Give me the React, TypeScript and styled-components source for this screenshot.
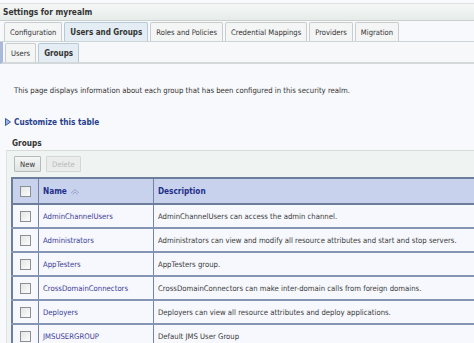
import React from "react";
import styled, { createGlobalStyle } from "styled-components";

const GlobalStyle = createGlobalStyle`
  body {
    margin: 0;
    background: #f8f9fc;
    font-family: "DejaVu Sans Condensed", "DejaVu Sans", "Liberation Sans", sans-serif;
    font-size: 7.7px;
    color: #333;
  }
`;

const Page = styled.div`
  width: 474px;
  height: 343px;
  overflow: hidden;
  padding-top: 3px;
  box-sizing: border-box;
`;

const TitleBar = styled.div`
  height: 16px;
  display: flex;
  align-items: center;
  padding-left: 3px;
  font-weight: bold;
  font-size: 8.3px;
  color: #333;
  background: linear-gradient(#f5f7f6, #e6ece9);
  border-top: 1px solid #dde2e0;
  border-bottom: 1px solid #c9d0cd;
`;

const TabRow = styled.div`
  display: flex;
  gap: 2px;
  padding: 1px 0 0 4px;
  border-bottom: 1px solid #cdd5d8;
`;

const Tab = styled.div<{ $active?: boolean }>`
  height: 18px;
  display: flex;
  align-items: center;
  padding: 0 5px;
  border: 1px solid ${(p) => (p.$active ? "#b7c9d6" : "#c9cecd")};
  border-bottom: none;
  border-radius: 2px 2px 0 0;
  background: ${(p) => (p.$active ? "#e4edf3" : "#f4f5f5")};
  font-weight: ${(p) => (p.$active ? "bold" : "normal")};
  font-size: ${(p) => (p.$active ? "8px" : "7.6px")};
  color: #333;
`;

const SubTabArea = styled.div`
  display: flex;
  gap: 2px;
  padding: 1px 0 0 2px;
  border-left: 3px solid #a8b9dc;
  border-bottom: 2px solid #d3d8da;
  background: #f7f8f9;
`;

const Intro = styled.p`
  margin: 22px 0 0 14px;
  line-height: 10px;
`;

const CustomizeLink = styled.div`
  margin: 21px 0 0 5px;
  display: flex;
  align-items: center;
  gap: 3px;
  font-weight: bold;
  font-size: 8.2px;
  color: #283f8c;
`;

const SectionHeading = styled.div`
  margin: 11px 0 0 12px;
  font-weight: bold;
  font-size: 8.2px;
  color: #333;
`;

const Panel = styled.div`
  margin: 2px 0 0 6px;
  padding: 5px 0 0 4px;
  background: #eff4f2;
  border-top: 1px solid #d6dcda;
  border-left: 1px solid #e0e5e3;
`;

const ButtonBar = styled.div`
  display: flex;
  gap: 5px;
  margin-left: 3px;
  margin-bottom: 5px;
`;

const Button = styled.button<{ $disabled?: boolean }>`
  height: 16px;
  padding: 0 5px;
  font: inherit;
  font-size: 7.7px;
  color: ${(p) => (p.$disabled ? "#b3b8b6" : "#333")};
  background: ${(p) => (p.$disabled ? "#e9eceb" : "linear-gradient(#f5f6f6, #dfe3e2)")};
  border: 1px solid ${(p) => (p.$disabled ? "#d3d8d6" : "#b5bbb9")};
  border-radius: 1px;
`;

const Table = styled.table`
  border-collapse: collapse;
  width: 490px;
  border: 2px solid #6d7e9c;
  border-right: none;
  table-layout: fixed;
`;

const HeadCell = styled.th<{ $w?: number }>`
  ${(p) => (p.$w ? `width: ${p.$w}px;` : "")}
  height: 24px;
  padding: 0 4px;
  text-align: left;
  font-size: 8.2px;
  color: #1f2f8a;
  background: #c9d2ec;
  border: 1px solid #7383a6;
  border-bottom: 2px solid #6d7e9c;
`;

const Cell = styled.td<{ $link?: boolean }>`
  height: 22px;
  padding: 0 4px;
  color: ${(p) => (p.$link ? "#3d3a98" : "#3a3a3a")};
  background: #f6f8fd;
  border: 1px solid #7383a6;
  border-top: 2px solid #8494b5;
  white-space: nowrap;
`;

const CheckCell = styled(Cell)`
  text-align: center;
  padding: 0;
`;

const Check = styled.span`
  display: inline-block;
  width: 9px;
  height: 9px;
  border: 1px solid #8a9090;
  background: linear-gradient(135deg, #e4e7e6, #fbfbfb);
  vertical-align: middle;
`;

const SortIcon = () => (
  <svg width="10" height="7" viewBox="0 0 10 7" style={{ marginLeft: 3, verticalAlign: "middle" }}>
    <path d="M1 5 L5 1.5 L9 5" fill="none" stroke="#9aa6c8" strokeWidth="1" />
    <path d="M2.5 6.3 L5 4 L7.5 6.3" fill="none" stroke="#9aa6c8" strokeWidth="1" />
  </svg>
);

const groups = [
  ["AdminChannelUsers", "AdminChannelUsers can access the admin channel."],
  ["Administrators", "Administrators can view and modify all resource attributes and start and stop servers."],
  ["AppTesters", "AppTesters group."],
  ["CrossDomainConnectors", "CrossDomainConnectors can make inter-domain calls from foreign domains."],
  ["Deployers", "Deployers can view all resource attributes and deploy applications."],
  ["JMSUSERGROUP", "Default JMS User Group"],
];

const tabs = ["Configuration", "Users and Groups", "Roles and Policies", "Credential Mappings", "Providers", "Migration"];

export default function App() {
  return (
    <Page>
      <GlobalStyle />
      <TitleBar>Settings for myrealm</TitleBar>
      <TabRow>
        {tabs.map((t) => (
          <Tab key={t} $active={t === "Users and Groups"}>
            {t}
          </Tab>
        ))}
      </TabRow>
      <SubTabArea>
        <Tab>Users</Tab>
        <Tab $active>Groups</Tab>
      </SubTabArea>
      <Intro>This page displays information about each group that has been configured in this security realm.</Intro>
      <CustomizeLink>
        <svg width="6" height="8" viewBox="0 0 6 8">
          <path d="M0.5 0.5 L5.5 4 L0.5 7.5 Z" fill="#9fb3da" stroke="#3a5aa8" strokeWidth="1" />
        </svg>
        Customize this table
      </CustomizeLink>
      <SectionHeading>Groups</SectionHeading>
      <Panel>
        <ButtonBar>
          <Button>New</Button>
          <Button $disabled>Delete</Button>
        </ButtonBar>
        <Table>
          <thead>
            <tr>
              <HeadCell $w={25} style={{ textAlign: "center", padding: 0 }}>
                <Check />
              </HeadCell>
              <HeadCell $w={106}>
                Name
                <SortIcon />
              </HeadCell>
              <HeadCell>Description</HeadCell>
            </tr>
          </thead>
          <tbody>
            {groups.map(([name, desc]) => (
              <tr key={name}>
                <CheckCell>
                  <Check />
                </CheckCell>
                <Cell $link>{name}</Cell>
                <Cell>{desc}</Cell>
              </tr>
            ))}
          </tbody>
        </Table>
      </Panel>
    </Page>
  );
}
